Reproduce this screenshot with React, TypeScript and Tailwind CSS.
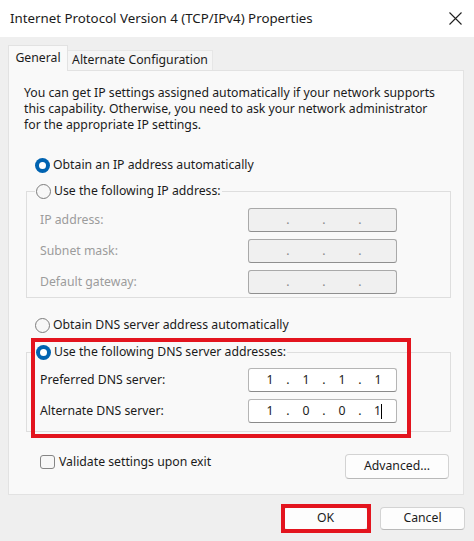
import { Fragment } from "react";

function Radio({ checked }: { checked?: boolean }) {
  if (checked) {
    return (
      <span className="w-[15px] h-[15px] rounded-full bg-[#0063b1] flex items-center justify-center shrink-0">
        <span className="w-[7px] h-[7px] rounded-full bg-white" />
      </span>
    );
  }
  return <span className="w-[15px] h-[15px] rounded-full border border-[#7d7d7d] bg-[#f7f7f7] shrink-0" />;
}

function IpField({ values, disabled, caret }: { values?: string[]; disabled?: boolean; caret?: boolean }) {
  return (
    <div
      className={
        disabled
          ? "w-[149px] h-[24px] rounded-[3px] border border-[#a9a9a9] border-b-[#8f8f8f] bg-[#f0f0f0] flex items-center pl-[5px] text-[#8a8a8a]"
          : "w-[149px] h-[24px] rounded-[3px] border border-[#b5b5b5] border-b-[#8a8a8a] bg-white flex items-center pl-[5px] text-[#1b1b1b]"
      }
    >
      {[0, 1, 2, 3].map((i) => (
        <Fragment key={i}>
          <span className="w-[32px] text-center leading-[16px]">
            {values?.[i]}
            {caret && i === 3 && <span className="inline-block w-px h-[15px] bg-black align-middle" />}
          </span>
          {i < 3 && <span className="w-[4px] text-center leading-[16px]">.</span>}
        </Fragment>
      ))}
    </div>
  );
}

function FieldRow({ label, disabled, values, caret }: { label: string; disabled?: boolean; values?: string[]; caret?: boolean }) {
  return (
    <div className="flex items-center h-[24px]">
      <span className={disabled ? "w-[208px] text-[#9c9c9c]" : "w-[208px]"}>{label}</span>
      <IpField disabled={disabled} values={values} caret={caret} />
    </div>
  );
}

export default function App() {
  return (
    <div className="w-[474px] h-[541px] bg-[#efefef] text-[#1b1b1b] text-[12.25px] font-['Noto_Sans',sans-serif] overflow-hidden">
      <div className="h-[37px] bg-white flex items-center justify-between pl-[10px] pr-[12px]">
        <span className="text-[13.3px]">Internet Protocol Version 4 (TCP/IPv4) Properties</span>
        <svg width="13" height="13" viewBox="0 0 13 13">
          <path d="M0.5 0.5 L12.5 12.5 M12.5 0.5 L0.5 12.5" stroke="#1f1f1f" strokeWidth="1.1" />
        </svg>
      </div>

      <div className="flex items-end pl-[8px] h-[33px]">
        <div className="relative z-10 -mb-px w-[60px] h-[26px] bg-[#f9f9f9] border border-b-0 border-[#e2e2e2] flex items-center justify-center">
          General
        </div>
        <div className="w-[145px] h-[20px] bg-[#f5f5f5] border border-l-0 border-b-0 border-[#e6e6e6] flex items-center justify-center">
          Alternate Configuration
        </div>
      </div>

      <div className="relative ml-[8px] mr-[10px] h-[425px] bg-[#f9f9f9] border border-[#e2e2e2] pl-[17px] pr-[12px]">
        <p className="mt-[14px] -ml-[2px] leading-[16px] whitespace-nowrap">
          You can get IP settings assigned automatically if your network supports
          <br />
          this capability. Otherwise, you need to ask your network administrator
          <br />
          for the appropriate IP settings.
        </p>

        <div className="mt-[24px] pl-[9px] h-[16px] flex items-center gap-[3px]">
          <Radio checked />
          <span>Obtain an IP address automatically</span>
        </div>

        <fieldset className="mt-[10px] border border-[#dedede] px-[13px] pt-[9px] pb-[3px]">
          <legend className="-ml-[5px] px-[1px]">
            <span className="h-[16px] flex items-center gap-[3px]">
              <Radio />
              <span>Use the following IP address:</span>
            </span>
          </legend>
          <div className="flex flex-col gap-[7px]">
            <FieldRow label="IP address:" disabled />
            <FieldRow label="Subnet mask:" disabled />
            <FieldRow label="Default gateway:" disabled />
          </div>
        </fieldset>

        <div className="mt-[19px] pl-[9px] h-[16px] flex items-center gap-[3px]">
          <Radio />
          <span>Obtain DNS server address automatically</span>
        </div>

        <fieldset className="mt-[11px] border border-[#dedede] px-[13px] pt-[8px] pb-[8px]">
          <legend className="-ml-[5px] px-[1px]">
            <span className="h-[16px] flex items-center gap-[3px]">
              <Radio checked />
              <span>Use the following DNS server addresses:</span>
            </span>
          </legend>
          <div className="flex flex-col gap-[7px]">
            <FieldRow label="Preferred DNS server:" values={["1", "1", "1", "1"]} />
            <FieldRow label="Alternate DNS server:" values={["1", "0", "0", "1"]} caret />
          </div>
        </fieldset>

        <div className="mt-[22px] flex items-start justify-between">
          <label className="pl-[14px] h-[16px] flex items-center gap-[4px]">
            <span className="w-[15px] h-[14px] rounded-[3px] border border-[#858585] bg-[#f7f7f7]" />
            <span>Validate settings upon exit</span>
          </label>
          <button className="mr-[2px] w-[104px] h-[25px] rounded-[4px] bg-[#fdfdfd] border border-[#d3d3d3] border-b-[#b9b9b9]">
            Advanced...
          </button>
        </div>

        {/* annotation around the DNS block */}
        <div className="absolute left-[22px] top-[267px] w-[380px] h-[100px] border-4 border-[#e3141e]" />
      </div>

      <div className="mt-[12px] pr-[9px] flex justify-end gap-[12px]">
        <div className="relative">
          <button className="w-[85px] h-[23px] rounded-[4px] bg-[#fdfdfd] border border-[#d3d3d3] border-b-[#b9b9b9]">OK</button>
          <div className="absolute -left-[2px] -right-[3px] -top-[3px] -bottom-[3px] border-4 border-[#e3141e]" />
        </div>
        <button className="w-[85px] h-[23px] rounded-[4px] bg-[#fdfdfd] border border-[#d3d3d3] border-b-[#b9b9b9]">Cancel</button>
      </div>
    </div>
  );
}
